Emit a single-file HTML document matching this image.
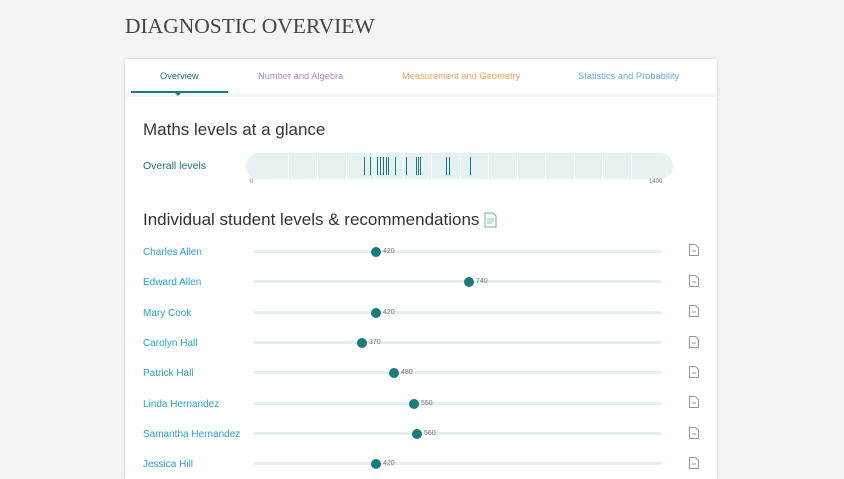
<!DOCTYPE html>
<html><head><style>
body{margin:0;background:#f4f4f4;width:844px;height:466px;overflow:hidden;font-family:"Liberation Sans",sans-serif;position:relative}
h1{position:absolute;left:125px;top:14px;margin:0;font:normal 21.5px "Liberation Serif",serif;color:#444;letter-spacing:0}
.card{position:absolute;left:125px;top:59px;width:592px;height:420px;background:#fff;box-shadow:0 0 3px rgba(0,0,0,.18)}
.tabs{position:absolute;left:0;top:0;width:592px;height:34px;border-bottom:4px solid #f6f6f6}
.tab{position:absolute;top:12px;font-size:9.3px}
.ul{position:absolute;left:6px;top:32px;width:97px;height:2px;background:#1a7a7e}
.ar{position:absolute;left:50px;top:34px;width:0;height:0;border-left:3px solid transparent;border-right:3px solid transparent;border-top:3px solid #1a7a7e}
.abs{position:absolute}
.h2{font-size:17px;color:#333}
.bar{position:absolute;left:121px;top:94px;width:427px;height:26px;border-radius:13px;background:#e6f1f2;overflow:hidden}
.div{position:absolute;top:0;width:1px;height:26px;background:#fff}
.tk{position:absolute;top:4px;width:1px;height:18px;background:#1a7a7e}
.name{position:absolute;left:18px;font-size:10px;color:#2a9fd6}
.track{position:absolute;left:129px;width:408px;height:3px;background:#e4efef;border-radius:2px}
.dot{position:absolute;width:10px;height:10px;border-radius:50%;background:#1a7a7e}
.val{position:absolute;font-size:7px;color:#777}
.ic{position:absolute;left:564px}
</style></head><body>
<h1>DIAGNOSTIC OVERVIEW</h1>
<div class="card">
<div class="tabs">
<span class="tab" style="left:35px;color:#1d6e70">Overview</span>
<span class="tab" style="left:133px;color:#a985d6">Number and Algebra</span>
<span class="tab" style="left:277px;color:#f4a25e">Measurement and Geometry</span>
<span class="tab" style="left:453px;color:#67a9e8">Statistics and Probability</span>
<div class="ul"></div><div class="ar"></div>
</div>
<div class="abs h2" style="left:18px;top:61px">Maths levels at a glance</div>
<div class="abs" style="left:18px;top:101px;font-size:10.5px;color:#1d6e70">Overall levels</div>
<div class="bar">
<div class="div" style="left:42px"></div><div class="div" style="left:71px"></div><div class="div" style="left:100px"></div><div class="div" style="left:128px"></div><div class="div" style="left:157px"></div><div class="div" style="left:185px"></div><div class="div" style="left:214px"></div><div class="div" style="left:242px"></div><div class="div" style="left:271px"></div><div class="div" style="left:299px"></div><div class="div" style="left:328px"></div><div class="div" style="left:356px"></div><div class="div" style="left:385px"></div>
<div class="tk" style="left:118px"></div><div class="tk" style="left:124px"></div><div class="tk" style="left:131px"></div><div class="tk" style="left:134px"></div><div class="tk" style="left:137px"></div><div class="tk" style="left:140px"></div><div class="tk" style="left:142px"></div><div class="tk" style="left:149px"></div><div class="tk" style="left:160px"></div><div class="tk" style="left:170px"></div><div class="tk" style="left:172px"></div><div class="tk" style="left:174px"></div><div class="tk" style="left:200px"></div><div class="tk" style="left:203px"></div><div class="tk" style="left:224px"></div>
</div>
<div class="val" style="left:125px;top:120px;font-size:6px">0</div>
<div class="val" style="left:524px;top:120px;font-size:6px">1400</div>
<div class="abs h2" style="left:18px;top:151px">Individual student levels &amp; recommendations</div>
<svg class="abs" style="left:359px;top:153px" width="13" height="16" viewBox="0 0 13 16"><path d="M1 1h8l3 3v11H1z" fill="none" stroke="#7aa" stroke-width="1"/><path d="M3 7h7M3 9h7M3 11h5" stroke="#7aa" stroke-width=".8"/></svg>

<div class="name" style="top:188px">Charles Allen</div><div class="track" style="top:191px"></div><div class="dot" style="left:246px;top:188px"></div><div class="val" style="left:258px;top:189px">420</div>
<div class="name" style="top:218px">Edward Allen</div><div class="track" style="top:221px"></div><div class="dot" style="left:339px;top:218px"></div><div class="val" style="left:351px;top:219px">740</div>
<div class="name" style="top:249px">Mary Cook</div><div class="track" style="top:252px"></div><div class="dot" style="left:246px;top:249px"></div><div class="val" style="left:258px;top:250px">420</div>
<div class="name" style="top:279px">Carolyn Hall</div><div class="track" style="top:282px"></div><div class="dot" style="left:232px;top:279px"></div><div class="val" style="left:244px;top:280px">370</div>
<div class="name" style="top:309px">Patrick Hall</div><div class="track" style="top:312px"></div><div class="dot" style="left:264px;top:309px"></div><div class="val" style="left:276px;top:310px">480</div>
<div class="name" style="top:340px">Linda Hernandez</div><div class="track" style="top:343px"></div><div class="dot" style="left:284px;top:340px"></div><div class="val" style="left:296px;top:341px">550</div>
<div class="name" style="top:370px">Samantha Hernandez</div><div class="track" style="top:373px"></div><div class="dot" style="left:287px;top:370px"></div><div class="val" style="left:299px;top:371px">560</div>
<div class="name" style="top:400px">Jessica Hill</div><div class="track" style="top:403px"></div><div class="dot" style="left:246px;top:400px"></div><div class="val" style="left:258px;top:401px">420</div>

<svg class="ic" style="top:185px" width="10" height="12"><path d="M.5 .5h6l3 3v8h-9z" fill="none" stroke="#999"/><path d="M3 7h4" stroke="#999"/></svg>
<svg class="ic" style="top:216px" width="10" height="12"><path d="M.5 .5h6l3 3v8h-9z" fill="none" stroke="#999"/><path d="M3 7h4" stroke="#999"/></svg>
<svg class="ic" style="top:246px" width="10" height="12"><path d="M.5 .5h6l3 3v8h-9z" fill="none" stroke="#999"/><path d="M3 7h4" stroke="#999"/></svg>
<svg class="ic" style="top:277px" width="10" height="12"><path d="M.5 .5h6l3 3v8h-9z" fill="none" stroke="#999"/><path d="M3 7h4" stroke="#999"/></svg>
<svg class="ic" style="top:307px" width="10" height="12"><path d="M.5 .5h6l3 3v8h-9z" fill="none" stroke="#999"/><path d="M3 7h4" stroke="#999"/></svg>
<svg class="ic" style="top:337px" width="10" height="12"><path d="M.5 .5h6l3 3v8h-9z" fill="none" stroke="#999"/><path d="M3 7h4" stroke="#999"/></svg>
<svg class="ic" style="top:368px" width="10" height="12"><path d="M.5 .5h6l3 3v8h-9z" fill="none" stroke="#999"/><path d="M3 7h4" stroke="#999"/></svg>
<svg class="ic" style="top:398px" width="10" height="12"><path d="M.5 .5h6l3 3v8h-9z" fill="none" stroke="#999"/><path d="M3 7h4" stroke="#999"/></svg>
</div>
</body></html>
